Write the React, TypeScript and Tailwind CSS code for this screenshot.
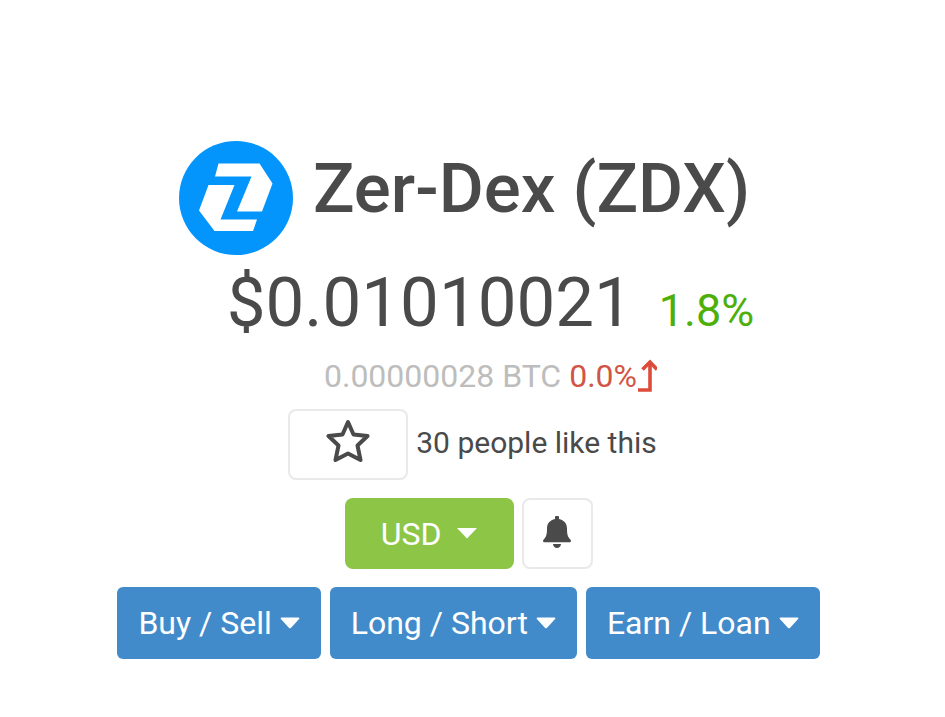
import { useState } from 'react';

const actions = ['Buy / Sell', 'Long / Short', 'Earn / Loan'];

function Caret() {
  return (
    <svg viewBox="0 0 20 12" className="h-3 w-5 shrink-0" fill="currentColor" aria-hidden="true">
      <path d="M1.5 0.5h17c.9 0 1.2.9.6 1.500l-8.200 8.900c-.5.5-1.300.5-1.800 0L.9 2C.3 1.400.6.5 1.500.5Z" />
    </svg>
  );
}

function Logo() {
  return (
    <svg viewBox="0 0 114 114" className="size-[114px] shrink-0" role="img" aria-label="Zer-Dex">
      <circle cx="57" cy="57" r="57" fill="#0495fc" />
      <path d="M39.500 22.500h41l13 20-10.500 28H58l14.500-35H36Z" fill="#fff" />
      <path d="M29.500 44h26L41.500 78.500h36.500l-4 11.500H35.500L20 69.500Z" fill="#fff" />
    </svg>
  );
}

export default function App() {
  const [liked, setLiked] = useState(false);
  const [alertOn, setAlertOn] = useState(false);

  return (
    <main className="min-h-screen bg-white px-4 pt-[141px] pb-14 font-[Roboto,sans-serif] text-[#4a4a4a]">
      <div className="flex items-start justify-center gap-5 pr-4">
        <Logo />
        <h1 className="pt-2 text-[69px] leading-[80px] font-medium whitespace-nowrap">Zer-Dex (ZDX)</h1>
      </div>

      <div className="mt-2 flex items-baseline justify-center gap-[26px] pl-9 leading-[80px]">
        <span className="text-[69px]">$0.01010021</span>
        <span className="text-[45px] text-[#4eaf0a]">1.8%</span>
      </div>

      <div className="mt-2 flex items-center justify-center pl-9 text-[32px] leading-[34px]">
        <span className="text-[#bdbdbd]">0.00000028 BTC</span>
        <span className="ml-2 text-[#d15545]">0.0%</span>
        <svg viewBox="0 0 20 34" className="h-[34px] w-5 text-[#dd4b3b]" fill="none" stroke="currentColor" strokeWidth="3.6" aria-hidden="true">
          <path d="M1 31h12V4" />
          <path d="M5.500 10.500L13 3l7 7.500" />
        </svg>
      </div>

      <div className="mt-4 flex items-center justify-center gap-2">
        <button
          type="button"
          aria-label="Like"
          aria-pressed={liked}
          onClick={() => setLiked(!liked)}
          className="flex h-[71px] w-[120px] items-center justify-center rounded-lg border-2 border-[#e9e9e9] pb-2"
        >
          <svg viewBox="0 0 44 44" className="size-11" fill={liked ? 'currentColor' : 'none'} stroke="currentColor" strokeWidth="4" strokeLinejoin="round" aria-hidden="true">
            <path d="M22 3l5.500 12.500L41.500 17 31.500 26.500 34.500 41 22 34.500 9.500 41 12.500 26.500 2.500 17l14-1.500Z" />
          </svg>
        </button>
        <span className="pb-1 text-[30px] leading-9">30 people like this</span>
      </div>

      <div className="mt-[18px] flex justify-center gap-2 pr-2">
        <button type="button" className="flex h-[71px] w-[169px] items-center justify-center gap-4 rounded-lg bg-[#8dc647] text-[32px] leading-9 text-white">
          USD
          <svg viewBox="0 0 20 12" className="h-3 w-5 shrink-0" fill="currentColor" aria-hidden="true">
            <path d="M0 0h20L10 10.500Z" />
          </svg>
        </button>
        <button
          type="button"
          aria-label="Price alert"
          aria-pressed={alertOn}
          onClick={() => setAlertOn(!alertOn)}
          className="flex size-[71px] items-center justify-center rounded-lg border-2 border-[#e9e9e9] pb-1"
        >
          <svg viewBox="0 0 28 32" className="h-8 w-7" fill="currentColor" aria-hidden="true">
            <path d="M12 3V1.500a2 2 0 0 1 4 0V3c5 1 8 4.500 8 9.500 0 6 .8 8.500 3.300 11 1 1 1 2.700-.3 2.700H1c-1.300 0-1.300-1.700-.3-2.700C3.200 21 4 18.500 4 12.500 4 7.500 7 4 12 3Z" />
            <path d="M10 28h8c0 2.200-1.800 4-4 4s-4-1.800-4-4Z" />
          </svg>
        </button>
      </div>

      <div className="mt-[18px] flex justify-center gap-[9px] pr-2">
        {actions.map((action) => (
          <button
            key={action}
            type="button"
            className="flex h-[72px] items-center gap-2 rounded-md bg-[#428bca] px-[21px] text-[32px] leading-9 whitespace-nowrap text-white"
          >
            {action}
            <Caret />
          </button>
        ))}
      </div>
    </main>
  );
}
